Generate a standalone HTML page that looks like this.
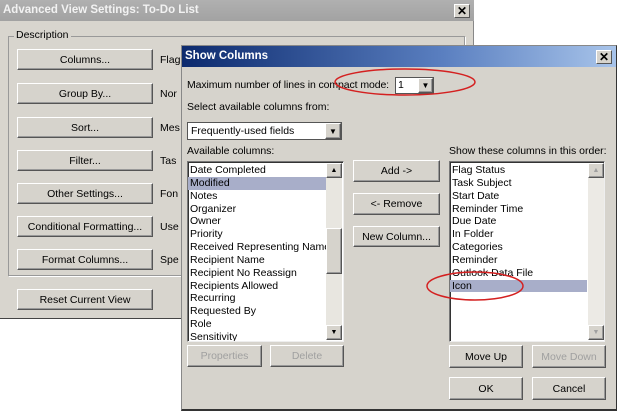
<!DOCTYPE html>
<html><head><meta charset="utf-8"><style>
*{box-sizing:border-box;margin:0;padding:0}
body{width:617px;height:411px;background:#fff;position:relative;overflow:hidden;font-family:"Liberation Sans",sans-serif;font-size:10.5px;color:#000}
.a{position:absolute;white-space:nowrap}
.btn{position:absolute;background:#d6d3cc;border:1px solid;border-color:#fff #555 #555 #fff;box-shadow:inset -1px -1px 0 #999;text-align:center;font-size:10.5px;display:flex;align-items:center;justify-content:center;white-space:nowrap}
.dis{color:#a0a0a0}
.list{position:absolute;background:#fff;border:1px solid;border-color:#777 #eee #eee #777;box-shadow:inset 1px 1px 0 #333;overflow:hidden}
.list div{height:12.85px;line-height:12.85px;padding-left:2px;white-space:nowrap;font-size:10.5px}
.sel{background:#a8aec9}
.x{position:absolute;width:16px;height:14px;background:#d6d3cc;border:1px solid;border-color:#fff #555 #555 #fff;font-weight:bold;font-size:12px;line-height:12px;text-align:center}
</style></head><body>
<div class="a" style="left:0;top:0;width:474px;height:319px;background:#d8d5ce;border-right:1px solid #888;border-bottom:1px solid #444"></div>
<div class="a" style="left:0;top:0;width:474px;height:21px;background:linear-gradient(#b0b0b0,#a2a2a2);color:#f2f2f2;font-weight:bold;font-size:11.5px;line-height:21px;padding-left:3px">Advanced View Settings: To-Do List</div>
<div class="x" style="left:454px;top:4px">✕</div>
<div class="a" style="left:8px;top:36px;width:457px;height:240px;border:1px solid #999;box-shadow:1px 1px 0 #fff"></div>
<div class="a" style="left:14px;top:29px;background:#d8d5ce;padding:0 2px">Description</div>
<div class="btn" style="left:17px;top:49px;width:136px;height:21px">Columns...</div>
<div class="btn" style="left:17px;top:83px;width:136px;height:21px">Group By...</div>
<div class="btn" style="left:17px;top:117px;width:136px;height:21px">Sort...</div>
<div class="btn" style="left:17px;top:150px;width:136px;height:21px">Filter...</div>
<div class="btn" style="left:17px;top:183px;width:136px;height:21px">Other Settings...</div>
<div class="btn" style="left:17px;top:216px;width:136px;height:21px">Conditional Formatting...</div>
<div class="btn" style="left:17px;top:249px;width:136px;height:21px">Format Columns...</div>
<div class="btn" style="left:17px;top:289px;width:136px;height:21px">Reset Current View</div>
<div class="a" style="left:160px;top:54px">Flag</div>
<div class="a" style="left:160px;top:88px">Nor</div>
<div class="a" style="left:160px;top:122px">Mes</div>
<div class="a" style="left:160px;top:155px">Tas</div>
<div class="a" style="left:160px;top:188px">Fon</div>
<div class="a" style="left:160px;top:221px">Use</div>
<div class="a" style="left:160px;top:254px">Spe</div>
<div class="a" style="left:181px;top:45px;width:436px;height:366px;background:#d6d3cc;border:1px solid #888;border-right-color:#333;border-bottom:2px solid #333"></div>
<div class="a" style="left:182px;top:46px;width:434px;height:21px;background:linear-gradient(90deg,#0c2a6e,#5a7fc0 60%,#a8c4ea);color:#fff;font-weight:bold;font-size:11.5px;line-height:21px;padding-left:3px">Show Columns</div>
<div class="x" style="left:596px;top:50px">✕</div>
<div class="a" style="left:187px;top:79px;letter-spacing:-0.1px">Maximum number of lines in compact mode:</div>
<div class="a" style="left:395px;top:77px;width:39px;height:17px;background:#fff;border:1px solid #555;padding-left:2px;line-height:15px">1</div>
<div class="btn" style="left:418px;top:78px;width:15px;height:15px;font-size:8px">▼</div>
<div class="a" style="left:187px;top:101px">Select available columns from:</div>
<div class="a" style="left:187px;top:122px;width:155px;height:18px;background:#fff;border:1px solid #555;padding-left:3px;line-height:16px">Frequently-used fields</div>
<div class="btn" style="left:325px;top:123px;width:16px;height:16px;font-size:8px">▼</div>
<div class="a" style="left:187px;top:145px">Available columns:</div>
<div class="a" style="left:449px;top:145px">Show these columns in this order:</div>
<div class="list" style="left:187px;top:161px;width:157px;height:181px;padding-top:2px">
<div>Date Completed</div><div class="sel" style="width:138px">Modified</div><div>Notes</div><div>Organizer</div><div>Owner</div><div>Priority</div><div>Received Representing Name</div><div>Recipient Name</div><div>Recipient No Reassign</div><div>Recipients Allowed</div><div>Recurring</div><div>Requested By</div><div>Role</div><div>Sensitivity</div>
</div>
<div class="a" style="left:326px;top:163px;width:16px;height:177px;background:#e8e6e0"></div>
<div class="btn" style="left:326px;top:163px;width:16px;height:15px;font-size:7px">▲</div>
<div class="btn" style="left:326px;top:228px;width:16px;height:46px"></div>
<div class="btn" style="left:326px;top:325px;width:16px;height:15px;font-size:7px">▼</div>
<div class="list" style="left:449px;top:161px;width:156px;height:181px;padding-top:2px">
<div>Flag Status</div><div>Task Subject</div><div>Start Date</div><div>Reminder Time</div><div>Due Date</div><div>In Folder</div><div>Categories</div><div>Reminder</div><div>Outlook Data File</div><div class="sel" style="width:137px">Icon</div>
</div>
<div class="a" style="left:588px;top:163px;width:16px;height:177px;background:#eceae5"></div>
<div class="btn dis" style="left:588px;top:163px;width:16px;height:15px;font-size:7px">▲</div>
<div class="btn dis" style="left:588px;top:325px;width:16px;height:15px;font-size:7px">▼</div>
<div class="btn" style="left:353px;top:160px;width:87px;height:22px">Add -&gt;</div>
<div class="btn" style="left:353px;top:193px;width:87px;height:22px">&lt;- Remove</div>
<div class="btn" style="left:353px;top:226px;width:87px;height:21px">New Column...</div>
<div class="btn dis" style="left:187px;top:345px;width:75px;height:22px">Properties</div>
<div class="btn dis" style="left:270px;top:345px;width:74px;height:22px">Delete</div>
<div class="btn" style="left:449px;top:345px;width:74px;height:23px">Move Up</div>
<div class="btn dis" style="left:532px;top:345px;width:74px;height:23px">Move Down</div>
<div class="btn" style="left:449px;top:377px;width:74px;height:23px">OK</div>
<div class="btn" style="left:532px;top:377px;width:74px;height:23px">Cancel</div>
<svg class="a" style="left:0;top:0" width="617" height="411"><ellipse cx="405" cy="82" rx="70" ry="13" fill="none" stroke="#d42020" stroke-width="1.5"/><ellipse cx="475" cy="286" rx="48" ry="14" fill="none" stroke="#d42020" stroke-width="1.5"/></svg>
</body></html>
